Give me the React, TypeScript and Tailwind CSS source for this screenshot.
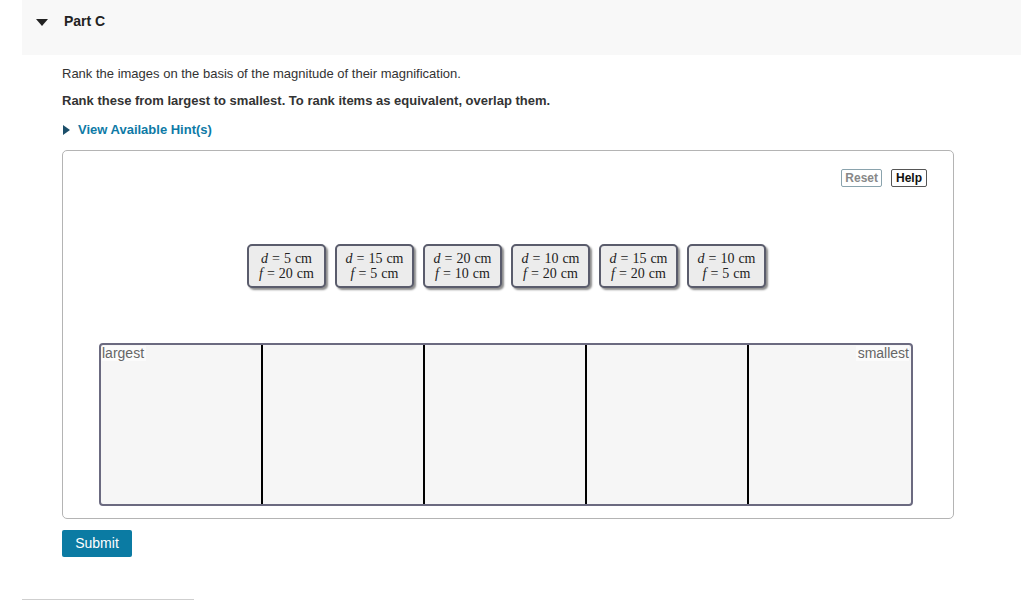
import React from "react";

const tiles = [
  ["5", "20"],
  ["15", "5"],
  ["20", "10"],
  ["10", "20"],
  ["15", "20"],
  ["10", "5"],
];

function Tile({ d, f }: { d: string; f: string }) {
  return (
    <div
      className="flex w-[79px] h-[44px] flex-col items-center justify-center rounded-[5px] border-2 border-[#5a5c6c] bg-[#ececec] shadow-[2px_2px_2px_rgba(0,0,0,0.45)] text-[14px] leading-[15px] text-[#222]"
      style={{ fontFamily: '"Liberation Serif", "DejaVu Serif", serif' }}
    >
      <div>
        <i>d</i>
        <span className="mx-[4px]">=</span>
        {d}
        <span className="ml-[4px]">cm</span>
      </div>
      <div>
        <i>f</i>
        <span className="mx-[4px]">=</span>
        {f}
        <span className="ml-[4px]">cm</span>
      </div>
    </div>
  );
}

export default function App() {
  return (
    <div
      className="relative w-[1021px] h-[600px] overflow-hidden bg-white text-[#333]"
      style={{ fontFamily: '"Liberation Sans", Arial, Helvetica, sans-serif' }}
    >
      <div className="ml-[22px] flex h-[55px] items-center bg-[#f8f8f8] pl-[14px] pb-[12px]">
        <svg width="12" height="8" viewBox="0 0 12 8" className="mt-[2px]">
          <polygon points="0,0 12,0 6,7" fill="#222" />
        </svg>
        <span className="ml-[16px] text-[14px] font-bold text-[#222]">Part C</span>
      </div>

      <div className="pl-[62px] pr-[68px]">
        <p className="mt-[11px] text-[13px] leading-[16px] text-[#333]">
          Rank the images on the basis of the magnitude of their magnification.
        </p>
        <p className="mt-[11px] text-[13px] font-bold leading-[16px] text-[#333]">
          Rank these from largest to smallest. To rank items as equivalent, overlap them.
        </p>
        <div className="mt-[13px] flex items-center text-[13px] font-bold leading-[16px] text-[#0e7aa6]">
          <svg width="7" height="10" viewBox="0 0 7 10" className="ml-[1px]">
            <polygon points="0,0 7,5 0,10" fill="#1c4f6a" />
          </svg>
          <span className="ml-[8px]">View Available Hint(s)</span>
        </div>

        <div className="mt-[12px] h-[369px] w-[892px] rounded-[5px] border border-[#b4b4b4] bg-white">
          <div className="flex justify-end gap-[9px] pr-[26px] pt-[18px]">
            <span className="rounded-[2px] border border-[#8aa3ad] px-[3px] text-[12px] font-bold leading-[16px] text-[#888]">
              Reset
            </span>
            <span className="rounded-[2px] border border-[#555] px-[4px] text-[12px] font-bold leading-[16px] text-[#111]">
              Help
            </span>
          </div>

          <div className="mt-[57px] flex gap-[9px] pl-[184px]">
            {tiles.map(([d, f], i) => (
              <Tile key={i} d={d} f={f} />
            ))}
          </div>

          <div className="ml-[36px] mt-[55px] grid h-[163px] w-[814px] grid-cols-5 overflow-hidden rounded-[4px] border-2 border-[#6b6a80] bg-[#f6f6f6]">
            <div className="flex items-start border-r-2 border-black">
              <span className="ml-[1px] mt-[1px] inline-block bg-white/60 pr-[2px] text-[14px] leading-[15px] text-[#666]">
                largest
              </span>
            </div>
            <div className="border-r-2 border-black" />
            <div className="border-r-2 border-black" />
            <div className="border-r-2 border-black" />
            <div className="flex items-start justify-end">
              <span className="mr-[2px] mt-[1px] inline-block bg-white/60 pl-[2px] text-[14px] leading-[15px] text-[#666]">
                smallest
              </span>
            </div>
          </div>
        </div>

        <button className="mt-[11px] h-[27px] w-[70px] rounded-[2px] bg-[#0b7ba3] text-[14px] font-medium text-white">
          Submit
        </button>
      </div>

      <div className="absolute bottom-0 left-[22px] h-px w-[172px] bg-[#cfcfcf]" />
    </div>
  );
}
